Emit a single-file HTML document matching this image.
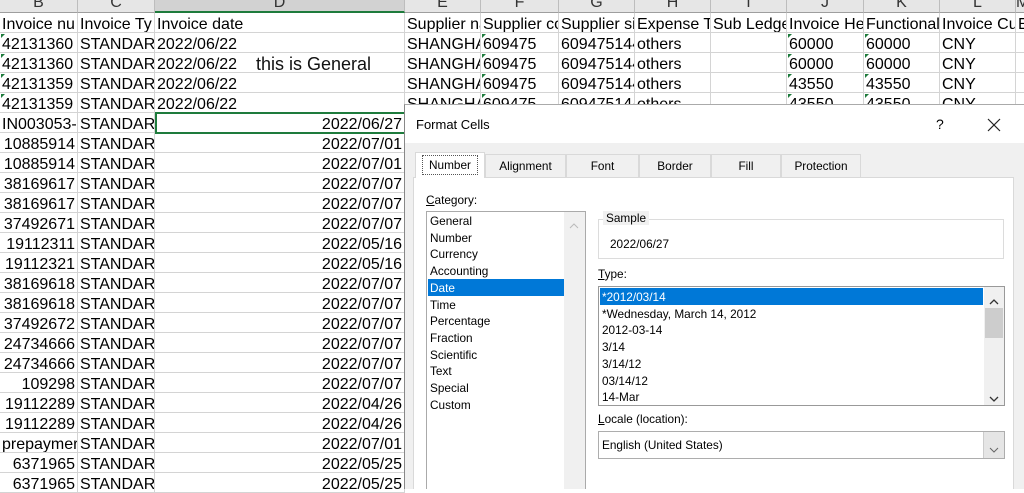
<!DOCTYPE html><html><head><style>
*{margin:0;padding:0;box-sizing:border-box}
body{width:1024px;height:489px;overflow:hidden;background:#fff;position:relative;font-family:"Liberation Sans",Arial,sans-serif}
.a{position:absolute;white-space:nowrap;overflow:hidden}
.c{font-size:16px;color:#000;height:20px;line-height:23px;padding:0 2px;border-right:1px solid #d4d4d4;border-bottom:1px solid #d4d4d4}
.h{background:#e6e6e6;font-size:16px;color:#333;text-align:center;height:13px;line-height:6px;border-right:1px solid #bdbdbd;border-bottom:1px solid #9e9e9e}
.r{text-align:right}
.t{border-top:4px solid #1e7b3c;border-right:4px solid transparent;width:0;height:0}
.d{font-size:11.8px;color:#000}
.tab{top:49px;height:24px;border:1px solid #d9d9d9;text-align:center;line-height:23px}
</style></head><body>
<div id="g"></div>
<script>
var cols=[0,78,155,405,481,559,635,711,787,864,940,1016,1030];
var L=["B","C","D","E","F","G","H","I","J","K","L","M"];
var h="";
for(var i=0;i<12;i++){h+='<div class="a h" style="left:'+cols[i]+'px;top:0;width:'+(cols[i+1]-cols[i])+'px;'+(i==2?'background:#d2d2d2;border-bottom:2px solid #1e7b3c':'')+'">'+L[i]+'</div>';}
var hdr=["Invoice nu","Invoice Ty","Invoice date","Supplier na","Supplier co","Supplier si","Expense T","Sub Ledge","Invoice He","Functional","Invoice Cu","E"];
var rows=[["42131360","STANDAR","2022/06/22","SHANGHA","609475","609475144","others","","60000","60000","CNY",""],
["42131360","STANDAR","2022/06/22","SHANGHA","609475","609475144","others","","60000","60000","CNY",""],
["42131359","STANDAR","2022/06/22","SHANGHA","609475","609475144","others","","43550","43550","CNY",""],
["42131359","STANDAR","2022/06/22","SHANGHA","609475","609475144","others","","43550","43550","CNY",""]];
var left=[["IN003053-","2022/06/27",0],["10885914","2022/07/01",1],["10885914","2022/07/01",1],["38169617","2022/07/07",1],["38169617","2022/07/07",1],["37492671","2022/07/07",1],["19112311","2022/05/16",1],["19112321","2022/05/16",1],["38169618","2022/07/07",1],["38169618","2022/07/07",1],["37492672","2022/07/07",1],["24734666","2022/07/07",1],["24734666","2022/07/07",1],["109298","2022/07/07",1],["19112289","2022/04/26",1],["19112289","2022/04/26",1],["prepaymer","2022/07/01",0],["6371965","2022/05/25",1],["6371965","2022/05/25",1]];
function cell(x,y,w,t,cls){return '<div class="a c '+(cls||'')+'" style="left:'+x+'px;top:'+y+'px;width:'+w+'px">'+t+'</div>';}
for(var i=0;i<12;i++)h+=cell(cols[i],13,cols[i+1]-cols[i],hdr[i]);
for(var r=0;r<4;r++){var y=33+r*20;for(var i=0;i<12;i++){h+=cell(cols[i],y,cols[i+1]-cols[i],rows[r][i]);if(i==0||i==4||i==8||i==9)h+='<div class="a t" style="left:'+(cols[i]+1)+'px;top:'+(y+1)+'px"></div>';}}
for(var r=0;r<19;r++){var y=113+r*20;var e=left[r];h+=cell(0,y,78,e[0],e[2]?'r':'');h+=cell(78,y,77,'STANDAR');h+=cell(155,y,250,e[1],'r');}
h+='<div class="a" style="left:155px;top:112px;width:251px;height:22px;border:2px solid #1e7b3c"></div>';
h+='<div class="a" style="left:256px;top:54px;font-size:18px;color:#111">this is General</div>';
document.getElementById("g").innerHTML=h;
</script>
<div class="a" style="left:404px;top:104px;width:620px;height:385px;background:#f0f0f0;border-left:1px solid #888;border-top:1px solid #aaa;overflow:hidden">
 <div class="a" style="left:0;top:0;width:620px;height:38px;background:#fff"></div>
 <div class="a d" style="left:11px;top:12px;font-size:13px">Format Cells</div>
 <div class="a d" style="left:531px;top:11px;font-size:14px">?</div>
 <div class="a" style="left:580px;top:11px;width:18px;height:18px"><svg width="18" height="18"><path d="M3 3L15 15M15 3L3 15" stroke="#222" stroke-width="1.2"/></svg></div>
 <div class="a" style="left:8px;top:72px;width:601px;height:320px;background:#fff;border:1px solid #d9d9d9"></div>
 <div class="a d tab" style="left:10px;top:47px;width:70px;height:26px;background:#fff;border-bottom:none;line-height:25px"><span style="border:1px dotted #555;padding:2px 6px">Number</span></div>
 <div class="a d tab" style="left:80px;width:81px">Alignment</div>
 <div class="a d tab" style="left:161px;width:73px">Font</div>
 <div class="a d tab" style="left:234px;width:72px">Border</div>
 <div class="a d tab" style="left:306px;width:70px">Fill</div>
 <div class="a d tab" style="left:376px;width:80px">Protection</div>
 <div class="a d" style="left:21px;top:88px"><u>C</u>ategory:</div>
 <div class="a" style="left:21px;top:106px;width:160px;height:290px;background:#fff;border:1px solid #aaa"></div>
 <div class="a" style="left:159px;top:107px;width:21px;height:290px;background:#f0f0f0"></div>
 <div class="a" style="left:164px;top:112px"><svg width="10" height="8"><path d="M1 6L5 2L9 6" fill="none" stroke="#bbb"/></svg></div>
 <div class="a" style="left:23px;top:174px;width:136px;height:17px;background:#0078d7"></div>
 <div class="a d" style="left:25px;top:108px;line-height:16.7px;white-space:pre">General
Number
Currency
Accounting
<span style="color:#fff">Date</span>
Time
Percentage
Fraction
Scientific
Text
Special
Custom</div>
 <div class="a" style="left:193px;top:114px;width:406px;height:40px;border:1px solid #dcdcdc;background:#fff"></div>
 <div class="a d" style="left:198px;top:106px;background:#f0f0f0;padding:0 3px">Sample</div>
 <div class="a d" style="left:205px;top:132px">2022/06/27</div>
 <div class="a d" style="left:193px;top:162px"><u>T</u>ype:</div>
 <div class="a" style="left:193px;top:181px;width:407px;height:120px;border:1px solid #999;background:#fff"></div>
 <div class="a" style="left:195px;top:183px;width:383px;height:17px;background:#0078d7"></div>
 <div class="a" style="left:579px;top:182px;width:20px;height:118px;background:#f0f0f0"></div>
 <div class="a" style="left:580px;top:203px;width:18px;height:30px;background:#cdcdcd"></div>
 <div class="a" style="left:584px;top:188px"><svg width="10" height="8"><path d="M1 6L5 2L9 6" fill="none" stroke="#333" stroke-width="1.3"/></svg></div>
 <div class="a" style="left:584px;top:285px"><svg width="10" height="8"><path d="M1 2L5 6L9 2" fill="none" stroke="#333" stroke-width="1.3"/></svg></div>
 <div class="a d" style="left:197px;top:184px;line-height:16.7px;white-space:pre"><span style="color:#fff">*2012/03/14</span>
*Wednesday, March 14, 2012
2012-03-14
3/14
3/14/12
03/14/12
14-Mar</div>
 <div class="a d" style="left:193px;top:307px"><u>L</u>ocale (location):</div>
 <div class="a" style="left:193px;top:326px;width:407px;height:28px;border:1px solid #adadad;background:#fff"></div>
 <div class="a" style="left:578px;top:327px;width:21px;height:26px;background:#e5e5e5;border-left:1px solid #ccc"></div>
 <div class="a" style="left:584px;top:336px"><svg width="10" height="8"><path d="M1 2L5 6L9 2" fill="none" stroke="#666"/></svg></div>
 <div class="a d" style="left:197px;top:333px">English (United States)</div>
</div>
</body></html>
